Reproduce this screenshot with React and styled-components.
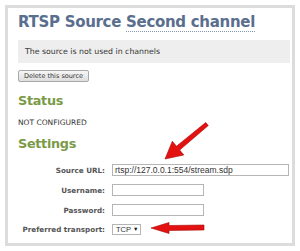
import styled, { createGlobalStyle } from "styled-components";

const Global = createGlobalStyle`
  html, body { margin: 0; padding: 0; background: #fff; }
  body { font-family: "DejaVu Sans", Verdana, sans-serif; }
`;

const Page = styled.div`
  position: relative;
  width: 300px;
  height: 251px;
  padding: 5px;
  box-sizing: border-box;
`;

const Frame = styled.div`
  width: 290px;
  height: 241px;
  box-sizing: border-box;
  border: 3px solid #dcdcdc;
  padding: 5px 2px 0 10px;
  display: flex;
  flex-direction: column;
`;

const Title = styled.h1`
  margin: 0;
  font-size: 15px;
  letter-spacing: -0.3px;
  font-weight: bold;
  color: #5a6e8e;
  white-space: nowrap;
  line-height: 18px;
  span {
    border-bottom: 1px dotted #8796b0;
  }
`;

const Notice = styled.div`
  margin-top: 9px;
  height: 23px;
  background: #eeeeee;
  font-size: 7.8px;
  color: #333;
  display: flex;
  align-items: center;
  padding-left: 7px;
`;

const Button = styled.button`
  margin-top: 7px;
  align-self: flex-start;
  width: 71px;
  height: 12px;
  padding: 0;
  font-family: inherit;
  font-size: 6.5px;
  color: #333;
  background: linear-gradient(#f6f6f6, #dedede);
  border: 1px solid #a8a8a8;
  border-radius: 2px;
`;

const Heading = styled.h2`
  margin: ${(p) => p.$top}px 0 0;
  font-size: 12.8px;
  letter-spacing: -0.3px;
  font-weight: bold;
  color: #7b9a47;
  line-height: 15px;
`;

const StatusText = styled.div`
  margin-top: 10px;
  font-size: 7.5px;
  line-height: 9px;
  color: #333;
`;

const Form = styled.div`
  margin-top: 13px;
  display: grid;
  grid-template-columns: 87px 1fr;
  column-gap: 7px;
  row-gap: 8px;
  align-items: center;
`;

const Label = styled.div`
  text-align: right;
  font-size: 7.2px;
  font-weight: bold;
  color: #555;
  white-space: nowrap;
`;

const Input = styled.div`
  box-sizing: border-box;
  height: 12px;
  width: ${(p) => (p.$wide ? "177px" : "92px")};
  border: 1px solid #b5b5b5;
  font-family: "Liberation Sans", Arial, sans-serif;
  font-size: 8.5px;
  color: #333;
  line-height: 10px;
  padding-left: 2px;
  white-space: nowrap;
`;

const Select = styled.div`
  box-sizing: border-box;
  height: 11px;
  width: 29px;
  border: 1px solid #b5b5b5;
  font-family: "Liberation Sans", Arial, sans-serif;
  font-size: 7.5px;
  color: #333;
  line-height: 9px;
  padding-left: 3px;
  white-space: nowrap;
  span {
    font-size: 5.5px;
    margin-left: 2px;
    vertical-align: 1px;
    color: #111;
  }
`;

const Overlay = styled.svg`
  position: absolute;
  left: 0;
  top: 0;
  pointer-events: none;
`;

export default function App() {
  return (
    <>
      <Global />
      <Page>
        <Frame>
          <Title>
            RTSP Source <span>Second channel</span>
          </Title>
          <Notice>The source is not used in channels</Notice>
          <Button>Delete this source</Button>
          <Heading $top={11}>Status</Heading>
          <StatusText>NOT CONFIGURED</StatusText>
          <Heading $top={9}>Settings</Heading>
          <Form>
            <Label>Source URL:</Label>
            <Input $wide>rtsp://127.0.0.1:554/stream.sdp</Input>
            <Label>Username:</Label>
            <Input />
            <Label>Password:</Label>
            <Input />
            <Label>Preferred transport:</Label>
            <Select>
              TCP<span>▼</span>
            </Select>
          </Form>
        </Frame>
        <Overlay width="300" height="251" viewBox="0 0 300 251">
          <path
            d="M165 159 L183.8 155 L179.7 150 L208.3 125.5 L205.7 122.5 L176.5 146.2 L172.3 141.2 Z"
            fill="#e3110f"
            stroke="#a50c0a"
            strokeWidth="0.6"
            strokeLinejoin="round"
          />
          <path
            d="M151 228 L169 222.5 L169 225.5 L204 225 L204 230 L169 230.5 L169 233.5 Z"
            fill="#e3110f"
            stroke="#a50c0a"
            strokeWidth="0.6"
            strokeLinejoin="round"
          />
        </Overlay>
      </Page>
    </>
  );
}
